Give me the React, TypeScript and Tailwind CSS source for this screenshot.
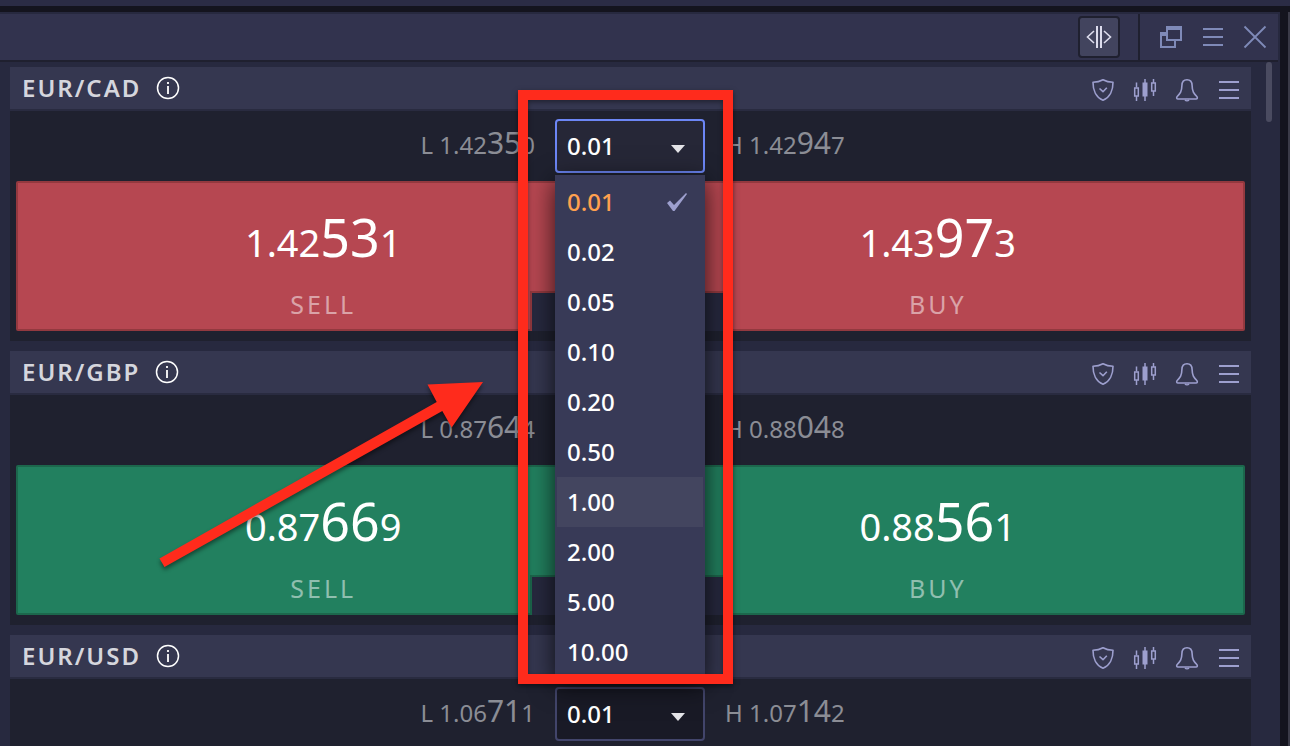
import type { ReactNode } from "react";

type Price = [string, string, string];

interface Instrument {
  symbol: string;
  low: Price;
  high: Price;
  sell: Price;
  buy: Price;
  trend: "down" | "up";
  open?: boolean;
}

const instruments: Instrument[] = [
  {
    symbol: "EUR/CAD",
    low: ["1.42", "35", "0"],
    high: ["1.42", "94", "7"],
    sell: ["1.42", "53", "1"],
    buy: ["1.43", "97", "3"],
    trend: "down",
    open: true,
  },
  {
    symbol: "EUR/GBP",
    low: ["0.87", "64", "4"],
    high: ["0.88", "04", "8"],
    sell: ["0.87", "66", "9"],
    buy: ["0.88", "56", "1"],
    trend: "up",
  },
  {
    symbol: "EUR/USD",
    low: ["1.06", "71", "1"],
    high: ["1.07", "14", "2"],
    sell: ["1.06", "95", "4"],
    buy: ["1.07", "01", "2"],
    trend: "up",
  },
];

const sizes = ["0.01", "0.02", "0.05", "0.10", "0.20", "0.50", "1.00", "2.00", "5.00", "10.00"];

function IconButton({ label, children }: { label: string; children: ReactNode }) {
  return (
    <button type="button" aria-label={label} className="flex size-6 items-center justify-center">
      {children}
    </button>
  );
}

function MenuIcon() {
  return (
    <svg width="24" height="24" viewBox="0 0 24 24" stroke="currentColor" strokeWidth="2">
      <path d="M2 4h20M2 12h20M2 20h20" />
    </svg>
  );
}

function ShieldIcon() {
  return (
    <svg width="24" height="24" viewBox="0 0 24 24" fill="none" stroke="currentColor" strokeWidth="1.6" strokeLinejoin="round">
      <path d="M12 1.8C9.300 3.300 5.500 4.200 2 4.200C1.900 12 5 19.500 12 22.200C19 19.500 22.100 12 22 4.200C18.500 4.200 14.700 3.300 12 1.800Z" />
      <path d="M8.500 10.500l3.500 3.200 3.800-4" />
    </svg>
  );
}

function CandlesIcon() {
  return (
    <svg width="24" height="24" viewBox="0 0 24 24" fill="none" stroke="currentColor" strokeWidth="1.500">
      <path d="M3.500 4.500v5M3.500 18v5M20.500 1v4M20.500 13v5" />
      <rect x="1.700" y="10" width="3.600" height="8" />
      <rect x="18.700" y="5" width="3.600" height="8" />
      <path d="M12 1v22" />
      <rect x="9.500" y="4.500" width="5" height="14" fill="currentColor" stroke="none" />
    </svg>
  );
}

function BellIcon() {
  return (
    <svg width="24" height="24" viewBox="0 0 24 24" fill="none" stroke="currentColor" strokeWidth="1.600" strokeLinejoin="round">
      <path d="M12 1.800C8.600 1.800 7 4.300 6.900 7.500C6.800 13.500 5.200 15.300 2.200 18.500C1.200 19.800 1.700 21 3 21H21C22.300 21 22.800 19.800 21.800 18.500C18.800 15.300 17.200 13.500 17.100 7.500C17 4.300 15.400 1.800 12 1.800Z" />
      <path d="M10 22c1 1 3 1 4 0" />
    </svg>
  );
}

function InfoIcon() {
  return (
    <svg width="24" height="24" viewBox="0 0 24 24" fill="none" stroke="currentColor" strokeWidth="1.500">
      <circle cx="12" cy="12" r="10.500" />
      <path d="M12 10v8M12 6v2" strokeWidth="1.800" />
    </svg>
  );
}

function SplitIcon() {
  return (
    <svg width="26" height="24" viewBox="0 0 26 24" fill="none" stroke="currentColor" strokeWidth="1.600">
      <path d="M8 6L1.500 12L8 18M18 6L24.500 12L18 18" />
      <path d="M11 1v22M15 1v22" strokeWidth="2" />
    </svg>
  );
}

function WindowsIcon() {
  return (
    <svg width="24" height="24" viewBox="0 0 24 24" fill="none" stroke="currentColor" strokeWidth="2">
      <path d="M7 8H2V22H16V16" />
      <path d="M1 9.500h6" strokeWidth="3" />
      <rect x="8" y="2" width="14" height="13" />
      <path d="M7 3h16" strokeWidth="4" />
    </svg>
  );
}

function CloseIcon() {
  return (
    <svg width="24" height="24" viewBox="0 0 24 24" stroke="currentColor" strokeWidth="1.800">
      <path d="M1.500 1.500l21 21M22.500 1.500l-21 21" />
    </svg>
  );
}

function Annotation() {
  return (
    <div className="pointer-events-none" aria-hidden="true">
      <div className="absolute -top-[29px] -left-[37px] z-30 h-[594px] w-[215px] border-10 border-[#ff2b1c] shadow-[0_2px_5px_rgba(0,0,0,0.5),inset_0_2px_5px_rgba(0,0,0,0.4)]" />
      <svg
        className="absolute top-[256px] -left-[401px] z-30 drop-shadow-[0_3px_2px_rgba(0,0,0,0.45)]"
        width="336"
        height="200"
        viewBox="0 0 336 200"
        fill="#ff2b1c"
      >
        <path d="M5.500 183.500L282.700 27L273.500 9.500L329 7L297.700 52.500L288.300 36L10.500 192Z" />
      </svg>
    </div>
  );
}

function SizeList() {
  return (
    <ul
      role="listbox"
      aria-label="Order size"
      className="absolute top-14 left-0 z-20 w-full border-2 border-[#383a57] bg-[#383a57] shadow-[0_6px_24px_rgba(0,0,0,0.75)]"
    >
      {sizes.map((size) => (
        <li
          key={size}
          role="option"
          aria-selected={size === "0.01"}
          className={
            "flex h-[50px] items-center justify-between pr-[15px] pl-2.5 text-2xl font-medium " +
            (size === "0.01" ? "text-[#ffa04f]" : size === "1.00" ? "bg-[#43455f] text-white" : "text-white")
          }
        >
          {size}
          {size === "0.01" && (
            <svg width="22" height="20" viewBox="0 0 22 20" fill="#9d9fce">
              <path d="M1 11L4 8.500L8 13L20 1L21 2L8.500 19H7Z" />
            </svg>
          )}
        </li>
      ))}
    </ul>
  );
}

function Range({ label, price }: { label: string; price: Price }) {
  return (
    <span className="text-2xl leading-8 text-[#8b8d95]">
      {label} {price[0]}
      <span className="text-[30px] leading-8">{price[1]}</span>
      {price[2]}
    </span>
  );
}

function PriceButton({ side, price, trend }: { side: string; price: Price; trend: "down" | "up" }) {
  return (
    <button
      type="button"
      className={
        "flex h-full flex-1 flex-col items-center rounded-xs border-2 pt-[22px] text-white " +
        (trend === "down" ? "border-[#93393f] bg-[#b64751]" : "border-[#1c674c] bg-[#22805f]")
      }
    >
      <span className="text-[38px] leading-[64px]">
        {price[0]}
        <span className="text-[52px] leading-[64px]">{price[1]}</span>
        {price[2]}
      </span>
      <span className="text-[25px] leading-[60px] tracking-[3px] text-white/50">{side}</span>
    </button>
  );
}

function Card({ item }: { item: Instrument }) {
  const id = "size-" + item.symbol.replace("/", "-");
  return (
    <section className="bg-[#1f212f]">
      <header className="flex h-11 items-center border-b-2 border-[#292b40] bg-[#353750] pr-2.5 pl-3">
        <h2 className="text-2xl font-semibold tracking-[2px] text-[#d5d6dd]">{item.symbol}</h2>
        <button type="button" aria-label={"About " + item.symbol} className="ml-[15px] text-white">
          <InfoIcon />
        </button>
        <div className="ml-auto flex gap-[18px] pt-1 text-[#9d9fce]">
          <IconButton label="Protection"><ShieldIcon /></IconButton>
          <IconButton label="Chart"><CandlesIcon /></IconButton>
          <IconButton label="Alerts"><BellIcon /></IconButton>
          <IconButton label="Menu"><MenuIcon /></IconButton>
        </div>
      </header>
      <div className="grid h-[70px] grid-cols-[1fr_150px_1fr] items-center gap-5 pr-px">
        <div className="pb-1 text-right"><Range label="L" price={item.low} /></div>
        <div className="relative">
          <label htmlFor={id} className="sr-only">Order size for {item.symbol}</label>
          <select
            id={id}
            defaultValue="0.01"
            className={
              "block h-[54px] w-full appearance-none rounded-sm border-2 pl-2.5 text-2xl font-medium text-white outline-none " +
              (item.open ? "border-[#6c86f5] bg-[#262737]" : "border-[#42456b] bg-[#191a26]")
            }
          >
            {sizes.map((size) => (
              <option key={size}>{size}</option>
            ))}
          </select>
          <svg className="pointer-events-none absolute top-[26px] right-5" width="14" height="8" viewBox="0 0 14 8" fill="#e4e4e8">
            <path d="M0 0H14L7 8Z" />
          </svg>
          {item.open && <SizeList />}
          {item.open && <Annotation />}
        </div>
        <div className="pb-1"><Range label="H" price={item.high} /></div>
      </div>
      <div className="relative flex h-40 px-1.5 pb-2.5">
        <PriceButton side="SELL" price={item.sell} trend={item.trend} />
        <PriceButton side="BUY" price={item.buy} trend={item.trend} />
        <div
          className={
            "absolute bottom-2.5 left-1/2 h-10 w-[202px] -translate-x-1/2 border-x-2 border-t-2 bg-[#27293f] " +
            (item.trend === "down" ? "border-[#93393f]" : "border-[#1c674c]")
          }
        />
      </div>
    </section>
  );
}

export default function App() {
  return (
    <div className="flex h-screen flex-col overflow-hidden bg-[#14141e] font-['Noto_Sans','Open_Sans',sans-serif]">
      <div className="h-1.5 shrink-0 bg-[#2b2c45]" />
      <div className="mt-1.5 flex min-h-0 flex-1 border-r-2 border-[#3b3b48] pr-2">
        <main className="flex min-w-0 flex-1 flex-col bg-[#27293f] pt-0.5">
          <header className="mr-0.5 flex h-12 shrink-0 items-center justify-end border-b-2 border-[#1f202f] bg-[#32334e] text-[#7f8ab8]">
            <button
              type="button"
              aria-label="Split columns"
              className="mr-[18px] flex size-[42px] items-center justify-center rounded-sm border-2 border-[#1f202f] bg-[#42445e] text-[#dcdcec]"
            >
              <SplitIcon />
            </button>
            <div className="flex h-full items-center gap-[18px] border-l-2 border-[#1f202f] pr-[11px] pl-[19px]">
              <IconButton label="Restore window"><WindowsIcon /></IconButton>
              <IconButton label="Window menu"><MenuIcon /></IconButton>
              <IconButton label="Close window"><CloseIcon /></IconButton>
            </div>
          </header>
          <div className="flex min-h-0 flex-1">
            <div className="flex min-w-0 flex-1 flex-col gap-2.5 pt-[5px] pl-2.5">
              {instruments.map((item) => (
                <Card key={item.symbol} item={item} />
              ))}
            </div>
            <div className="ml-[15px] h-[60px] w-1.5 rounded-full bg-[#4a4b60]" />
            <div className="w-2" />
          </div>
        </main>
      </div>
    </div>
  );
}
